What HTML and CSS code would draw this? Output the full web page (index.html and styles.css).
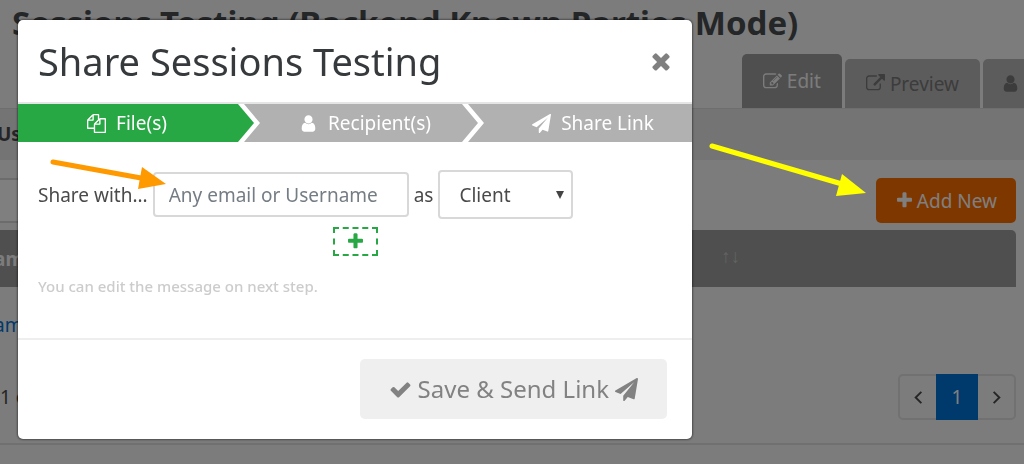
FILE: index.html
```
<!DOCTYPE html>
<html lang="en">
<head>
  <meta charset="UTF-8">
  <title>Share Sessions Testing</title>
  <link rel="stylesheet" href="styles.css">
</head>
<body>

  <!-- icon set -->
  <svg class="sprite" aria-hidden="true">
    <symbol id="check" viewBox="0 0 1792 1792"><path d="M1671 566q0 40-28 68l-724 724-136 136q-28 28-68 28t-68-28l-136-136-362-362q-28-28-28-68t28-68l136-136q28-28 68-28t68 28l294 295 656-657q28-28 68-28t68 28l136 136q28 28 28 68z"/></symbol>
    <symbol id="plus" viewBox="0 0 1792 1792"><path d="M1600 736v192q0 40-28 68t-68 28h-416v416q0 40-28 68t-68 28h-192q-40 0-68-28t-28-68v-416h-416q-40 0-68-28t-28-68v-192q0-40 28-68t68-28h416v-416q0-40 28-68t68-28h192q40 0 68 28t28 68v416h416q40 0 68 28t28 68z"/></symbol>
    <symbol id="close" viewBox="0 0 1792 1792"><path d="M1490 1322q0 40-28 68l-136 136q-28 28-68 28t-68-28l-294-294-294 294q-28 28-68 28t-68-28l-136-136q-28-28-28-68t28-68l294-294-294-294q-28-28-28-68t28-68l136-136q28-28 68-28t68 28l294 294 294-294q28-28 68-28t68 28l136 136q28 28 28 68t-28 68l-294 294 294 294q28 28 28 68z"/></symbol>
    <symbol id="user" viewBox="0 0 1792 1792"><path d="M1536 1399q0 109-62.500 187t-150.500 78h-854q-88 0-150.500-78t-62.500-187q0-85 8.500-160.500t31.500-152 58.500-131 94-89 134.500-34.500q131 128 313 128t313-128q76 0 134.500 34.500t94 89 58.500 131 31.500 152 8.500 160.500zm-256-887q0 159-112.500 271.500t-271.500 112.500-271.500-112.500-112.500-271.500 112.500-271.500 271.500-112.500 271.500 112.500 112.500 271.500z"/></symbol>
    <symbol id="plane" viewBox="0 0 1792 1792"><path d="M1764 11q33 24 27 64l-256 1536q-5 29-32 45-14 8-31 8-11 0-24-5l-453-185-242 295q-18 23-49 23-13 0-22-4-19-7-30.500-23.500t-11.500-36.500v-349l864-1059-1069 925-395-162q-37-14-40-55-2-40 32-59l1664-960q15-9 32-9 20 0 36 11z"/></symbol>
    <symbol id="files" viewBox="0 0 1792 1792"><path d="M1696 384q40 0 68 28t28 68v1216q0 40-28 68t-68 28h-960q-40 0-68-28t-28-68v-288h-544q-40 0-68-28t-28-68v-672q0-40 20-88t48-76l408-408q28-28 76-48t88-20h416q40 0 68 28t28 68v328q68-40 128-40h416zm-544 213l-299 299h299v-299zm-640-384l-299 299h299v-299zm196 647l316-316v-416h-384v416q0 40-28 68t-68 28h-416v640h512v-256q0-40 20-88t48-76zm956 804v-1152h-384v416q0 40-28 68t-68 28h-416v640h896z"/></symbol>
    <symbol id="edit" viewBox="0 0 1792 1792"><path d="M888 1184l116-116-152-152-116 116v56h96v96h56zm440-720q-16-16-33 1l-350 350q-17 17-1 33t33-1l350-350q17-17 1-33zm80 594v190q0 119-84.500 203.500t-203.500 84.500h-832q-119 0-203.500-84.500t-84.500-203.500v-832q0-119 84.500-203.500t203.500-84.500h832q63 0 117 25 15 7 18 23 3 17-9 29l-49 49q-14 14-32 8-23-6-45-6h-832q-66 0-113 47t-47 113v832q0 66 47 113t113 47h832q66 0 113-47t47-113v-126q0-13 9-22l64-64q15-15 35-7t20 29zm-96-738l288 288-672 672h-288v-288zm444 132l-92 92-288-288 92-92q28-28 68-28t68 28l152 152q28 28 28 68t-28 68z"/></symbol>
    <symbol id="external" viewBox="0 0 1792 1792"><path d="M1408 928v320q0 119-84.500 203.500t-203.500 84.500h-832q-119 0-203.500-84.500t-84.500-203.500v-832q0-119 84.500-203.500t203.500-84.500h704q14 0 23 9t9 23v64q0 14-9 23t-23 9h-704q-66 0-113 47t-47 113v832q0 66 47 113t113 47h832q66 0 113-47t47-113v-320q0-14 9-23t23-9h64q14 0 23 9t9 23zm384-864v512q0 26-19 45t-45 19-45-19l-176-176-652 652q-10 10-23 10t-23-10l-114-114q-10-10-10-23t10-23l652-652-176-176q-19-19-19-45t19-45 45-19h512q26 0 45 19t19 45z"/></symbol>
    <symbol id="left" viewBox="0 0 20 20"><path d="M13 4L7 10l6 6" fill="none" stroke="currentColor" stroke-width="2"/></symbol>
    <symbol id="right" viewBox="0 0 20 20"><path d="M7 4l6 6-6 6" fill="none" stroke="currentColor" stroke-width="2"/></symbol>
  </svg>

  <div class="page">
    <header class="page-header">
      <h1>Sessions Testing (Backend Known Parties Mode)</h1>
      <nav class="tabs">
        <a href="#edit" class="tab active"><svg class="icon"><use href="#edit"/></svg> Edit</a>
        <a href="#preview" class="tab"><svg class="icon"><use href="#external"/></svg> Preview</a>
        <a href="#users" class="tab tab-cut" aria-label="Users"><svg class="icon"><use href="#user"/></svg></a>
      </nav>
    </header>

    <main class="card">
      <h2>Us</h2>
      <div class="toolbar">
        <input type="search" class="search" aria-label="Search">
        <button type="button" class="btn-new"><svg class="icon"><use href="#plus"/></svg> Add New</button>
      </div>
      <table>
        <thead>
          <tr><th class="col-name">am</th><th class="sort">↑↓</th></tr>
        </thead>
        <tbody>
          <tr><td class="col-name"><a href="#row">am</a></td><td></td></tr>
        </tbody>
      </table>
      <div class="table-footer">
        <span>1 o</span>
        <nav class="pager">
          <a href="#prev" aria-label="Previous"><svg class="icon"><use href="#left"/></svg></a>
          <a href="#1" class="current">1</a>
          <a href="#next" aria-label="Next"><svg class="icon"><use href="#right"/></svg></a>
        </nav>
      </div>
    </main>
  </div>

  <div class="backdrop">
    <form class="modal" role="dialog" aria-labelledby="modal-title">
      <div class="modal-header">
        <h3 id="modal-title">Share Sessions Testing</h3>
        <button type="button" class="close" aria-label="Close"><svg class="icon"><use href="#close"/></svg></button>
      </div>

      <ol class="steps">
        <li class="step done"><span><svg class="icon"><use href="#files"/></svg>File(s)</span></li>
        <li class="step"><span><svg class="icon"><use href="#user"/></svg>Recipient(s)</span></li>
        <li class="step"><span><svg class="icon"><use href="#plane"/></svg>Share Link</span></li>
      </ol>

      <div class="modal-body">
        <div class="share-row">
          <label for="who">Share with...</label>
          <input type="text" id="who" placeholder="Any email or Username">
          <label for="role">as</label>
          <span class="select">
            <select id="role"><option>Client</option></select>
          </span>
        </div>
        <button type="button" class="add-row" aria-label="Add recipient"><svg class="icon"><use href="#plus"/></svg></button>
        <p class="note">You can edit the message on next step.</p>
      </div>

      <div class="modal-footer">
        <button type="submit" class="btn-save" disabled><svg class="icon"><use href="#check"/></svg> Save &amp; Send Link <svg class="icon"><use href="#plane"/></svg></button>
      </div>
    </form>
  </div>

  <!-- hint arrows -->
  <svg class="arrow arrow-orange" viewBox="0 0 116 32"><path d="M4 6L92 22" stroke="#ff9900" stroke-width="5" stroke-linecap="round"/><path d="M93 11l24 17-28 5z" fill="#ff9900"/></svg>
  <svg class="arrow arrow-yellow" viewBox="0 0 160 56"><path d="M4 6L134 44" stroke="#ffff00" stroke-width="5" stroke-linecap="round"/><path d="M134 34l24 19-30 3z" fill="#ffff00"/></svg>

</body>
</html>
```
FILE: styles.css
```
* {
  box-sizing: border-box;
}
body {
  margin: 0;
  font-family: "Noto Sans", "Open Sans", sans-serif;
  font-size: 19px;
  line-height: 28px;
  color: #4a4a4a;
  background-color: #f8f8f8;
  overflow: hidden;
}
h1, h2, h3, p, ol {
  margin: 0;
  padding: 0;
}
button, input, select {
  font: inherit;
  color: inherit;
}
a {
  color: #0074d9;
  text-decoration: none;
}
.sprite {
  position: absolute;
  width: 0;
  height: 0;
}
.icon {
  width: 19px;
  height: 19px;
  fill: currentColor;
  flex: none;
}

/* page behind the dialog */
.page-header {
  border-bottom: 1px solid #dcdcdc;
}
h1 {
  padding-left: 12px;
  font-size: 33px;
  line-height: 46px;
  color: #484c50;
}
.tabs {
  display: flex;
  justify-content: flex-end;
  align-items: flex-end;
  gap: 3px;
  padding-top: 8px;
}
.tab {
  display: flex;
  align-items: center;
  gap: 5px;
  height: 49px;
  padding: 0 21px;
  border-radius: 5px 5px 0 0;
  background-color: #b8b8b8;
  color: #787878;
}
.tab.active {
  height: 54px;
  background-color: #9e9e9e;
  color: #f8f8f8;
}
.tab-cut {
  padding: 0 4px 0 18px;
  border-radius: 5px 0 0 0;
}
.card {
  border-bottom: 2px solid #e0e0e0;
  padding-bottom: 23px;
}
h2 {
  padding: 11px 0 12px;
  font-size: 19px;
  text-indent: -3px;
  background-color: #e8e8e8;
}
.toolbar {
  display: flex;
  justify-content: space-between;
  align-items: flex-start;
  padding: 18px 8px 7px 0;
}
.search {
  width: 200px;
  height: 45px;
  border: 2px solid #d8d8d8;
  border-left: 0;
  background-color: #fff;
}
.btn-new {
  display: flex;
  align-items: center;
  gap: 3px;
  height: 45px;
  padding: 0 19px;
  border: 0;
  border-radius: 5px;
  background-color: #ff6e00;
  color: #fff;
}
table {
  width: calc(100% - 8px);
  border-collapse: collapse;
  text-align: left;
}
th {
  height: 57px;
  padding: 0;
  background-color: #9e9e9e;
  color: #f8f8f8;
}
th:last-child {
  border-radius: 0 5px 0 0;
}
th.sort {
  padding-bottom: 6px;
  color: #c4c4c4;
  font-weight: normal;
}
.col-name {
  width: 71%;
  text-indent: -6px;
}
td {
  height: 76px;
  padding: 0;
}
.table-footer {
  display: flex;
  justify-content: space-between;
  align-items: center;
  padding: 11px 8px 0 0;
}
.pager {
  display: flex;
  border: 2px solid #e2e2e2;
  border-radius: 5px;
}
.pager a {
  display: flex;
  align-items: center;
  justify-content: center;
  width: 36px;
  height: 42px;
  color: #4a4a4a;
}
.pager .current {
  width: 42px;
  height: 46px;
  margin: -2px 0;
  background-color: #0074d9;
  color: #fff;
}

/* dialog */
.backdrop {
  position: fixed;
  inset: 0;
  padding: 20px 18px;
  background-color: rgba(0, 0, 0, 0.5);
}
.modal {
  max-width: 674px;
  border-radius: 5px;
  background-color: #fff;
  box-shadow: 0 0 2px 1px rgba(0, 0, 0, 0.4);
}
.modal-header {
  display: flex;
  justify-content: space-between;
  align-items: center;
  padding: 14px 18px 14px 20px;
  border-bottom: 2px solid #e5e5e5;
}
.modal-header h3 {
  font-size: 38px;
  line-height: 54px;
  font-weight: normal;
  color: #373a3c;
}
.close {
  display: flex;
  padding: 0;
  border: 0;
  background: none;
  color: #808080;
}
.close .icon {
  width: 26px;
  height: 26px;
}
.steps {
  display: flex;
  list-style: none;
}
.step {
  display: flex;
  flex: 1;
  justify-content: center;
  align-items: center;
  height: 38px;
  margin-left: -10px;
  padding: 0 4px 0 12px;
  background-color: #b1b1b1;
  color: #fff;
  clip-path: polygon(0 0, calc(100% - 16px) 0, 100% 50%, calc(100% - 16px) 100%, 0 100%, 16px 50%);
}
.step span {
  display: flex;
  align-items: center;
  gap: 10px;
}
.step.done {
  margin-left: 0;
  padding: 0 18px 0 0;
  background-color: #28a745;
  clip-path: polygon(0 0, calc(100% - 16px) 0, 100% 50%, calc(100% - 16px) 100%, 0 100%);
}
.step:last-child {
  padding: 0 0 0 6px;
  clip-path: polygon(0 0, 100% 0, 100% 100%, 0 100%, 16px 50%);
}
.step:last-child span {
  margin-left: 20px;
}
.modal-body {
  padding: 28px 20px 38px;
}
.share-row {
  display: flex;
  align-items: center;
  gap: 5px;
}
.share-row input {
  width: 256px;
  height: 45px;
  padding: 0 14px;
  border: 2px solid #d8d8d8;
  border-radius: 4px;
}
.share-row input::placeholder {
  color: #757d84;
  opacity: 1;
}
.select {
  position: relative;
}
.select::after {
  content: "";
  position: absolute;
  right: 9px;
  top: 21px;
  border: 4px solid transparent;
  border-top: 8px solid #444;
  border-bottom: 0;
  pointer-events: none;
}
.select select {
  display: block;
  width: 135px;
  height: 49px;
  padding: 0 19px;
  border: 2px solid #d8d8d8;
  border-radius: 4px;
  background-color: #fff;
  appearance: none;
}
.add-row {
  display: flex;
  justify-content: center;
  align-items: center;
  width: 45px;
  height: 29px;
  margin: 8px auto 0;
  padding: 0;
  border: 2px dashed #28a745;
  background: none;
  color: #28a745;
}
.note {
  margin-top: 16px;
  font-size: 15px;
  font-weight: 500;
  color: #ccc;
}
.modal-footer {
  display: flex;
  justify-content: flex-end;
  padding: 19px 25px 20px;
  border-top: 2px solid #eceeef;
}
.btn-save {
  display: flex;
  align-items: center;
  gap: 6px;
  height: 60px;
  padding: 0 29px;
  border: 0;
  border-radius: 5px;
  background-color: #efefef;
  color: #828282;
  font-size: 24px;
}
.btn-save .icon {
  width: 23px;
  height: 23px;
}

/* arrows lie over everything */
.arrow {
  position: absolute;
  fill: none;
  overflow: visible;
}
.arrow-orange {
  left: 49px;
  top: 156px;
  width: 116px;
  height: 32px;
}
.arrow-yellow {
  left: 708px;
  top: 140px;
  width: 160px;
  height: 56px;
}
```
